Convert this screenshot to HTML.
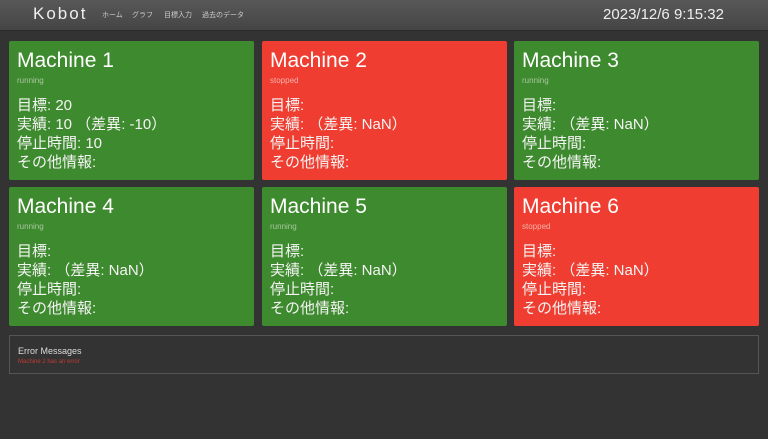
<!DOCTYPE html>
<html><head><meta charset="utf-8"><style>
*{margin:0;padding:0;box-sizing:border-box}
body{width:768px;height:439px;background:#333;font-family:"Liberation Sans","Noto Sans CJK JP",sans-serif;color:#fff;overflow:hidden;position:relative}
.hd{position:absolute;left:0;top:0;width:768px;height:31px;background:linear-gradient(#585858,#454545);border-bottom:1px solid #2a2a2a}
.logo{position:absolute;left:33px;top:4px;font-size:17px;letter-spacing:2px;color:#eee}
.nav{position:absolute;top:10px;font-size:7px;color:#ccc}
.time{position:absolute;right:44px;top:6px;font-size:15px;color:#eee}
.c{position:absolute;width:245px;height:139px;border-radius:2px;padding:8px 8px}
.g{background:#3e8a2e}.r{background:#ef3e31}
.c h2{font-weight:normal;font-size:21px;line-height:24px;margin-top:0}
.c .s{font-size:8px;color:#bbb;margin-top:3px;margin-bottom:10px;line-height:10px}
.r .s{color:#f4b0a8}.g .s{color:#a8c8a0}
.c p{font-size:15px;line-height:19px;color:#f4f4f4}
.err{position:absolute;left:9px;top:335px;width:750px;height:39px;border:1px solid #555;padding:10px 8px}
.err b{font-weight:normal;font-size:9px;color:#ddd;display:block}
.err i{font-style:normal;font-size:6px;color:#c03a32;display:block;margin-top:3px}
</style></head><body>
<div class="hd"><div class="logo">Kobot</div>
<span class="nav" style="left:102px">ホーム</span><span class="nav" style="left:132px">グラフ</span><span class="nav" style="left:164px">目標入力</span><span class="nav" style="left:202px">過去のデータ</span>
<div class="time">2023/12/6 9:15:32</div></div>
<div class="c g" style="left:9px;top:41px"><h2>Machine 1</h2><div class="s">running</div><p>目標: 20<br>実績: 10 （差異: -10）<br>停止時間: 10<br>その他情報:</p></div>
<div class="c r" style="left:262px;top:41px"><h2>Machine 2</h2><div class="s">stopped</div><p>目標:<br>実績: （差異: NaN）<br>停止時間:<br>その他情報:</p></div>
<div class="c g" style="left:514px;top:41px"><h2>Machine 3</h2><div class="s">running</div><p>目標:<br>実績: （差異: NaN）<br>停止時間:<br>その他情報:</p></div>
<div class="c g" style="left:9px;top:187px"><h2>Machine 4</h2><div class="s">running</div><p>目標:<br>実績: （差異: NaN）<br>停止時間:<br>その他情報:</p></div>
<div class="c g" style="left:262px;top:187px"><h2>Machine 5</h2><div class="s">running</div><p>目標:<br>実績: （差異: NaN）<br>停止時間:<br>その他情報:</p></div>
<div class="c r" style="left:514px;top:187px"><h2>Machine 6</h2><div class="s">stopped</div><p>目標:<br>実績: （差異: NaN）<br>停止時間:<br>その他情報:</p></div>
<div class="err"><b>Error Messages</b><i>Machine 2 has an error</i></div>
</body></html>
